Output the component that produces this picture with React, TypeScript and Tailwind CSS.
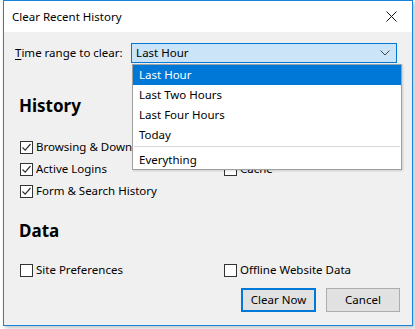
import React from "react";

type Item = { label: string; checked: boolean };

const historyItems: Item[] = [
  { label: "Browsing & Download History", checked: true },
  { label: "Cookies", checked: true },
  { label: "Active Logins", checked: true },
  { label: "Cache", checked: false },
  { label: "Form & Search History", checked: true },
];

const dataItems: Item[] = [
  { label: "Site Preferences", checked: false },
  { label: "Offline Website Data", checked: false },
];

const ranges = ["Last Hour", "Last Two Hours", "Last Four Hours", "Today"];

function Box({ checked }: { checked: boolean }) {
  return (
    <span className="w-[13px] h-[13px] border border-[#333333] bg-white flex items-center justify-center shrink-0">
      {checked && (
        <svg width="11" height="11" viewBox="0 0 11 11">
          <path d="M1.5 5.5 L4.2 8.2 L9.5 2" fill="none" stroke="#333333" strokeWidth="1.2" />
        </svg>
      )}
    </span>
  );
}

function Check({ item }: { item: Item }) {
  return (
    <div className="flex items-center h-[22px] gap-[3px]">
      <Box checked={item.checked} />
      <span>{item.label}</span>
    </div>
  );
}

export default function App() {
  return (
    <div className="w-[415px] h-[329px] bg-white" style={{ fontFamily: '"Noto Sans", "Open Sans", sans-serif' }}>
      <div className="ml-[3px] w-[410px] h-[326px] border border-[#1883d7] flex flex-col text-[11.5px] text-black shadow-[2px_2px_4px_rgba(0,0,0,0.25)]">
        <div className="h-[31px] bg-white flex items-center justify-between pl-[8px] pr-[15px]">
          <span>Clear Recent History</span>
          <svg width="11" height="11" viewBox="0 0 11 11">
            <path d="M0.5 0.5 L10.5 10.5 M10.5 0.5 L0.5 10.5" stroke="#111111" strokeWidth="1" />
          </svg>
        </div>
        <div className="flex-1 bg-[#f0f0f0] relative px-[15px]">
          <div className="flex items-center mt-[11px] h-[20px] -ml-[4px]">
            <span className="w-[118px]">
              <span className="underline underline-offset-2">T</span>ime range to clear:
            </span>
            <div className="w-[270px] h-[20px] border border-[#0078d7] bg-[#cce4f7] flex items-center justify-between pl-[4px] pr-[6px]">
              <span>Last Hour</span>
              <svg width="10" height="6" viewBox="0 0 10 6">
                <path d="M0.5 0.5 L5 5 L9.5 0.5" fill="none" stroke="#444444" strokeWidth="1" />
              </svg>
            </div>
          </div>

          <div className="mt-[32px] h-[22px] flex items-center text-[17px] font-bold">History</div>
          <div className="grid grid-cols-[204px_1fr] mt-[19px] ml-[1px]">
            {historyItems.map((it) => (
              <Check key={it.label} item={it} />
            ))}
          </div>

          <div className="mt-[18px] h-[22px] flex items-center text-[17px] font-bold">Data</div>
          <div className="grid grid-cols-[204px_1fr] mt-[17px] ml-[1px]">
            {dataItems.map((it) => (
              <Check key={it.label} item={it} />
            ))}
          </div>

          <div className="flex justify-end gap-[10px] mt-[7px] -mr-[3px]">
            <button className="w-[75px] h-[24px] border-2 border-[#0078d7] bg-[#e1e1e1]">Clear Now</button>
            <button className="w-[74px] h-[24px] border border-[#adadad] bg-[#e1e1e1]">Cancel</button>
          </div>

          <div className="absolute left-[128px] top-[32px] w-[270px] bg-white border border-[#a0a0a0] shadow-[1px_1px_2px_rgba(0,0,0,0.15)]">
            {ranges.map((r, i) => (
              <div
                key={r}
                className={`h-[20px] flex items-center pl-[6px] ${i === 0 ? "bg-[#0078d7] text-white" : ""}`}
              >
                {r}
              </div>
            ))}
            <div className="h-[1px] bg-[#d7d7d7] mt-[1px] mx-[1px]" />
            <div className="h-[22px] flex items-center pl-[6px] pt-[3px]">Everything</div>
          </div>
        </div>
      </div>
    </div>
  );
}
